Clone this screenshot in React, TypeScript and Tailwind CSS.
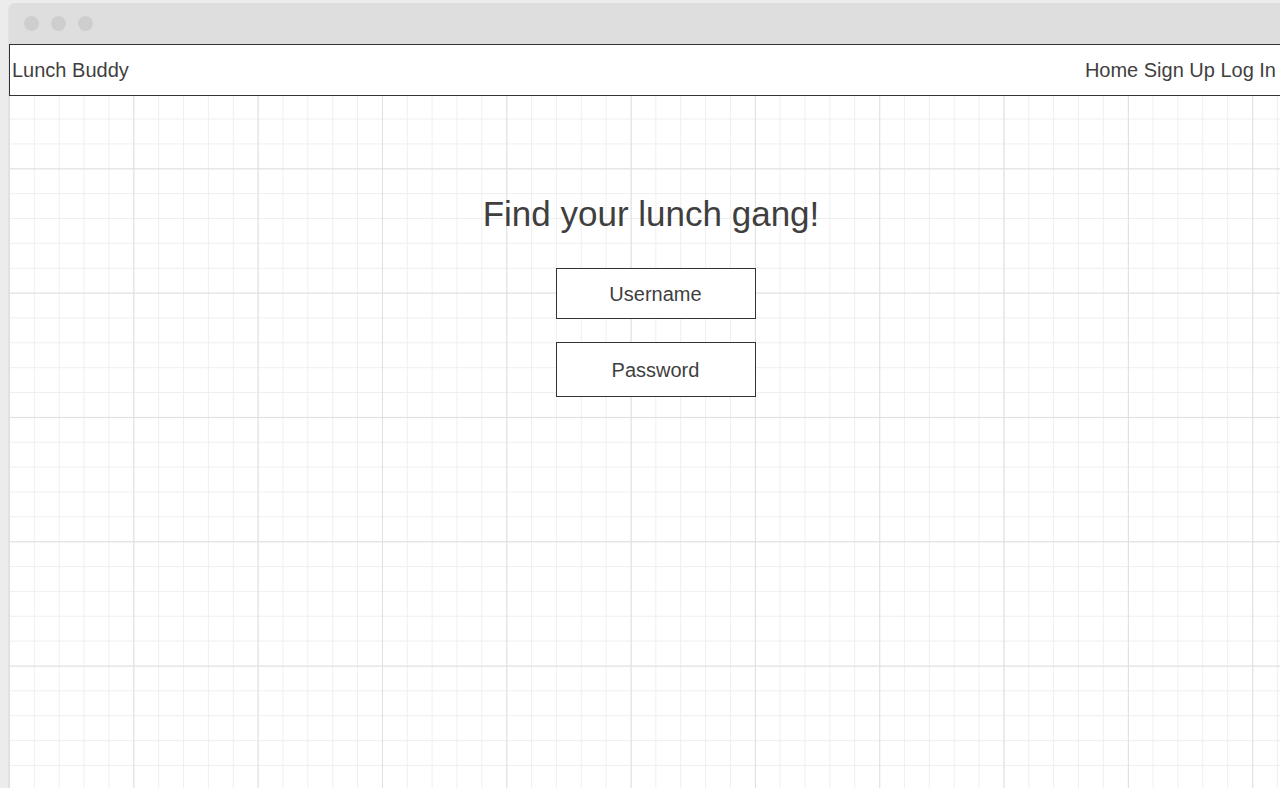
export default function App() {
  return (
    <div className="h-screen w-full overflow-hidden bg-[#ececec] pt-[3px] pl-[8px] font-['Liberation_Sans',Arial,sans-serif] text-[#3f3f3f]">
      {/* Browser window frame */}
      <div className="flex h-full w-[1300px] flex-col overflow-hidden rounded-tl-[6px] border-l border-[#e2e2e2] bg-white">
        {/* Title bar */}
        <div className="flex h-[41px] shrink-0 items-center gap-[12px] bg-[#dedede] pl-[15px]">
          <span className="h-[15px] w-[15px] rounded-full bg-[#cecece]" />
          <span className="h-[15px] w-[15px] rounded-full bg-[#cecece]" />
          <span className="h-[15px] w-[15px] rounded-full bg-[#cecece]" />
        </div>

        {/* Canvas with grid */}
        <div className="flex-1 bg-white [background-image:linear-gradient(to_right,#e0e0e0_1px,transparent_1px),linear-gradient(to_bottom,#e0e0e0_1px,transparent_1px),linear-gradient(to_right,#efefef_1px,transparent_1px),linear-gradient(to_bottom,#efefef_1px,transparent_1px)] [background-size:124.33px_124.33px,124.33px_124.33px,24.87px_24.87px,24.87px_24.87px]">
          {/* Navbar */}
          <div className="h-[52px] border border-[#333333] bg-white">
            <div className="flex h-full w-[1268px] items-center justify-between px-[2px] text-[20px] leading-[23px]">
              <span>Lunch Buddy</span>
              <div className="flex gap-[5.5px]">
                <span>Home</span>
                <span>Sign Up</span>
                <span>Log In</span>
              </div>
            </div>
          </div>

          {/* Login form */}
          <div className="flex w-[1272px] flex-col items-center pt-[98px]">
            <h1 className="ml-[12px] text-[35px] leading-[40px]">Find your lunch gang!</h1>
            <div className="ml-[21px] mt-[34px] flex h-[51px] w-[200px] items-center justify-center border border-[#333333] bg-white text-[20px]">
              Username
            </div>
            <div className="ml-[21px] mt-[23px] flex h-[55px] w-[200px] items-center justify-center border border-[#333333] bg-white text-[20px]">
              Password
            </div>
          </div>
        </div>
      </div>
    </div>
  );
}
